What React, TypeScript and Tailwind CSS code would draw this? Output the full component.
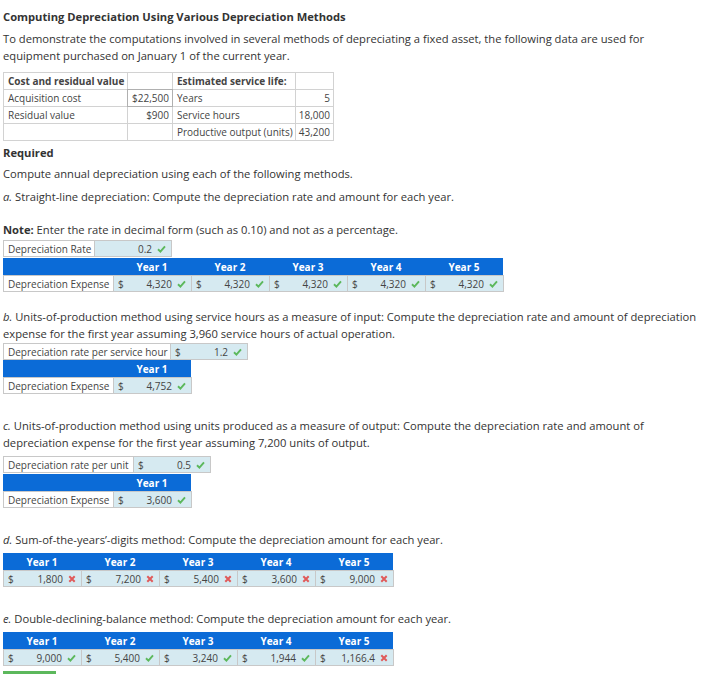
import * as React from "react";

const Check = () => (
  <svg width="9" height="8" viewBox="0 0 9 8" className="inline-block shrink-0">
    <path d="M1 4.3 L3.4 6.6 L8 1.3" fill="none" stroke="#5cb85c" strokeWidth="1.9" />
  </svg>
);

const Cross = () => (
  <svg width="8" height="8" viewBox="0 0 8 8" className="inline-block shrink-0">
    <path d="M1.3 1.3 L6.7 6.7 M6.7 1.3 L1.3 6.7" fill="none" stroke="#e05a5a" strokeWidth="2" />
  </svg>
);

type Cell = { value: string; ok: boolean };

const cellBase = "h-[17px] shrink-0 border border-[#c8c8c8] flex items-center";

function ValueCell({ value, ok, dollar = true, w, first }: Cell & { dollar?: boolean; w: string; first?: boolean }) {
  return (
    <div className={`${cellBase} ${w} ${first ? "" : "-ml-px"} bg-[#d6eaf1] pl-[4px] pr-[5px]`}>
      {dollar && <span>$</span>}
      <span className="ml-auto mr-[5px]">{value}</span>
      {ok ? <Check /> : <Cross />}
    </div>
  );
}

function Label({ text, w }: { text: string; w: string }) {
  return <div className={`${cellBase} ${w} bg-white px-[4px] whitespace-nowrap`}>{text}</div>;
}

function RateRow({ label, labelW, value, dollar, className = "" }: { label: string; labelW: string; value: string; dollar?: boolean; className?: string }) {
  return (
    <div className={`flex text-[10px] leading-none text-[#444] ${className}`}>
      <Label text={label} w={labelW} />
      <ValueCell value={value} ok dollar={dollar} w="w-[78px]" />
    </div>
  );
}

function YearTable({ label, cells, className = "" }: { label?: string; cells: Cell[]; className?: string }) {
  return (
    <div className={`text-[10px] leading-none text-[#444] ${className}`}>
      <div className="flex h-[17px] items-center bg-[#0b6bd7] font-bold text-white" style={{ width: (label ? 110 : 0) + cells.length * 78 }}>
        {label && <div className="w-[110px] shrink-0" />}
        {cells.map((_, i) => (
          <div key={i} className="w-[78px] shrink-0 text-center">
            Year {i + 1}
          </div>
        ))}
      </div>
      <div className="flex">
        {label && <Label text={label} w="w-[111px]" />}
        {cells.map((c, i) => (
          <ValueCell key={i} {...c} w="w-[79px]" first={!label && i === 0} />
        ))}
      </div>
    </div>
  );
}

function InfoRow({ cells, first }: { cells: { text?: string; bold?: boolean; right?: boolean; dark?: boolean }[]; first?: boolean }) {
  const widths = ["w-[125px]", "w-[46px]", "w-[124px]", "w-[39px]"];
  return (
    <div className={`flex ${first ? "" : "-mt-px"}`}>
      {cells.map((c, i) => (
        <div
          key={i}
          className={`flex h-[18px] shrink-0 items-center border whitespace-nowrap ${widths[i]} ${i ? "-ml-px" : ""} ${
            c.dark ? "relative z-10 border-[#b0b0b0]" : "border-[#d2d2d2]"
          } ${c.right ? "justify-end pr-[3px]" : "pl-[4px]"} ${c.bold ? "font-bold" : ""}`}
        >
          {c.text}
        </div>
      ))}
    </div>
  );
}

export default function App() {
  return (
    <div className="min-h-[674px] bg-white pl-[3px] pt-[8px] font-['Open_Sans',sans-serif] text-[11.2px] leading-[17px] text-[#333]">
      <h1 className="text-[11.2px] font-bold">Computing Depreciation Using Various Depreciation Methods</h1>
      <p className="mt-[5px] w-[690px]">
        To demonstrate the computations involved in several methods of depreciating a fixed asset, the following data are used for
        equipment purchased on January 1 of the current year.
      </p>

      <div className="mt-[8px] text-[10px] leading-none text-[#444]">
        <InfoRow first cells={[{ text: "Cost and residual value", bold: true }, {}, { text: "Estimated service life:", bold: true }, {}]} />
        <InfoRow cells={[{ text: "Acquisition cost" }, { text: "$22,500", right: true, dark: true }, { text: "Years" }, { text: "5", right: true }]} />
        <InfoRow cells={[{ text: "Residual value" }, { text: "$900", right: true }, { text: "Service hours" }, { text: "18,000", right: true }]} />
        <InfoRow cells={[{}, {}, { text: "Productive output (units)" }, { text: "43,200", right: true }]} />
      </div>

      <p className="mt-[2.5px] font-bold">Required</p>
      <p className="mt-[4px]">Compute annual depreciation using each of the following methods.</p>
      <p className="mt-[6px]">
        <i>a.</i> Straight-line depreciation: Compute the depreciation rate and amount for each year.
      </p>

      <p className="mt-[16px]">
        <b>Note:</b> Enter the rate in decimal form (such as 0.10) and not as a percentage.
      </p>
      <RateRow className="mt-[2.5px]" label="Depreciation Rate" labelW="w-[92px]" value="0.2" dollar={false} />
      <YearTable
        className="mt-[1px]"
        label="Depreciation Expense"
        cells={[
          { value: "4,320", ok: true },
          { value: "4,320", ok: true },
          { value: "4,320", ok: true },
          { value: "4,320", ok: true },
          { value: "4,320", ok: true },
        ]}
      />

      <p className="mt-[15.5px] w-[700px]">
        <i>b.</i> Units-of-production method using service hours as a measure of input: Compute the depreciation rate and amount of depreciation
        expense for the first year assuming 3,960 service hours of actual operation.
      </p>
      <RateRow className="mt-[1.5px]" label="Depreciation rate per service hour" labelW="w-[168px]" value="1.2" dollar />
      <YearTable label="Depreciation Expense" cells={[{ value: "4,752", ok: true }]} />

      <p className="mt-[22.5px] w-[690px]">
        <i>c.</i> Units-of-production method using units produced as a measure of output: Compute the depreciation rate and amount of
        depreciation expense for the first year assuming 7,200 units of output.
      </p>
      <RateRow className="mt-[5.5px]" label="Depreciation rate per unit" labelW="w-[131px]" value="0.5" dollar />
      <YearTable className="mt-[1px]" label="Depreciation Expense" cells={[{ value: "3,600", ok: true }]} />

      <p className="mt-[22.5px]">
        <i>d.</i> Sum-of-the-years’-digits method: Compute the depreciation amount for each year.
      </p>
      <YearTable
        className="mt-[5.5px]"
        cells={[
          { value: "1,800", ok: false },
          { value: "7,200", ok: false },
          { value: "5,400", ok: false },
          { value: "3,600", ok: false },
          { value: "9,000", ok: false },
        ]}
      />

      <p className="mt-[22.5px]">
        <i>e.</i> Double-declining-balance method: Compute the depreciation amount for each year.
      </p>
      <YearTable
        className="mt-[5.5px]"
        cells={[
          { value: "9,000", ok: true },
          { value: "5,400", ok: true },
          { value: "3,240", ok: true },
          { value: "1,944", ok: true },
          { value: "1,166.4", ok: false },
        ]}
      />
      <div className="mt-[5px] h-[4px] w-[53px] bg-[#5cb85c]" />
    </div>
  );
}
